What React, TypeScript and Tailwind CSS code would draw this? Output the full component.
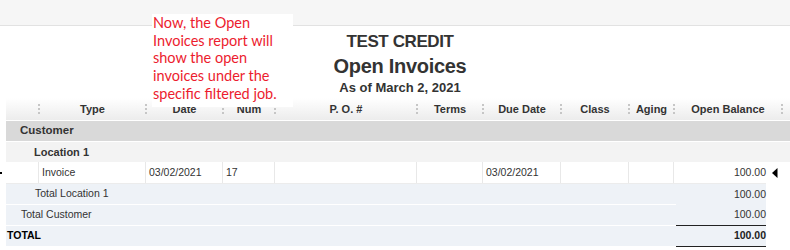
const cols = [
  { label: '', w: 'w-[32px]' },
  { label: 'Type', w: 'w-[107px]' },
  { label: 'Date', w: 'w-[77px]' },
  { label: 'Num', w: 'w-[52px]' },
  { label: 'P. O. #', w: 'w-[142px]' },
  { label: 'Terms', w: 'w-[66px]' },
  { label: 'Due Date', w: 'w-[78px]' },
  { label: 'Class', w: 'w-[68px]' },
  { label: 'Aging', w: 'w-[45px]' },
]

function Sep() {
  return <span className="h-[10px] w-0 shrink-0 border-l-2 border-dotted border-[#c6c6c6]" />
}

function HeaderRow() {
  return (
    <div className="flex h-[22px]">
      <div className="w-[6px] shrink-0" />
      <div className="flex flex-1 bg-gradient-to-b from-white to-[#ececec] text-[11px] font-bold text-[#333]">
        {cols.map((c, i) => (
          <div key={i} className={`${c.w} flex shrink-0 items-center`}>
            {i > 0 && <Sep />}
            <span className="flex-1 text-center">{c.label}</span>
          </div>
        ))}
        <div className="flex w-[108px] shrink-0 items-center">
          <Sep />
          <span className="flex-1 text-center">Open Balance</span>
        </div>
        <div className="flex flex-1 items-center">
          <Sep />
        </div>
      </div>
    </div>
  )
}

function GroupRow({ label, className }: { label: string; className: string }) {
  return (
    <div className="mt-[1px] flex h-[20px]">
      <div className="w-[6px] shrink-0" />
      <div className={`flex flex-1 items-center font-bold text-[#333] ${className}`}>{label}</div>
    </div>
  )
}

function InvoiceRow() {
  const cells = ['Invoice', '03/02/2021', '17', '', '', '03/02/2021', '', '']
  return (
    <div className="flex h-[22px]">
      <div className="flex w-[6px] shrink-0 items-center">
        <span className="h-[2px] w-[2px] bg-black" />
      </div>
      <div className="flex w-[760px] shrink-0 border-b border-[#ececec] bg-white text-[10.5px] text-[#333]">
        <div className="w-[32px] shrink-0" />
        {cells.map((t, i) => (
          <div
            key={i}
            className={`${cols[i + 1].w} flex shrink-0 items-center border-l border-[#e8e8e8] pl-[3px]`}
          >
            {t}
          </div>
        ))}
        <div className="flex flex-1 items-center justify-end border-l border-[#e8e8e8]">100.00</div>
      </div>
      <div className="flex flex-1 items-center pl-[6px]">
        <svg width="6" height="10" viewBox="0 0 6 10">
          <path d="M5.5 0 L0 5 L5.5 10 Z" fill="#000" />
        </svg>
      </div>
    </div>
  )
}

function TotalRow({
  label,
  pad,
  bold,
  lineBelow,
}: {
  label: string
  pad: string
  bold?: boolean
  lineBelow?: boolean
}) {
  return (
    <div className="flex h-[21px]">
      <div className="w-[6px] shrink-0" />
      <div
        className={`flex w-[670px] shrink-0 items-center border-b border-white bg-[#eef2f7] ${pad} ${
          bold ? 'font-bold text-black' : 'text-[#333]'
        }`}
      >
        {label}
      </div>
      <div
        className={`flex w-[90px] shrink-0 items-center justify-end bg-[#eef2f7] ${
          lineBelow ? 'border-b border-[#222]' : ''
        } ${bold ? 'font-bold text-[#222]' : 'text-[#333]'}`}
      >
        100.00
      </div>
      <div className="flex-1" />
    </div>
  )
}

export default function App() {
  return (
    <div className="relative h-[250px] w-[790px] overflow-hidden bg-white font-['Liberation_Sans',Arial,sans-serif]">
      <div className="h-[26px] border-b border-[#e2e2e2] bg-[#f6f6f6]" />

      <div className="mt-[6px] flex flex-col items-center pl-[10px] font-bold text-[#333]">
        <div className="h-[20px] text-[17px] leading-[20px] tracking-[-0.4px]">TEST CREDIT</div>
        <div className="mt-[2px] h-[24px] text-[20px] leading-[24px] tracking-[-0.3px]">Open Invoices</div>
        <div className="mt-[2px] h-[16px] text-[13px] leading-[16px]">As of March 2, 2021</div>
      </div>

      <div className="mt-[2px]">
        <HeaderRow />
        <GroupRow label="Customer" className="bg-[#d9d9d9] pl-[14px] text-[11.5px]" />
        <GroupRow label="Location 1" className="bg-[#f3f3f3] pl-[28px] text-[11px]" />
        <InvoiceRow />
        <div className="text-[10.5px]">
          <TotalRow label="Total Location 1" pad="pl-[29px]" />
          <TotalRow label="Total Customer" pad="pl-[15px]" lineBelow />
          <TotalRow label="TOTAL" pad="pl-[1px]" bold lineBelow />
        </div>
      </div>

      {/* callout note over the header */}
      <div className="absolute left-[152px] top-[14px] h-[93px] w-[141px] bg-white pl-[1px] font-['Lato',sans-serif] text-[14.5px] leading-[17.7px] text-[#ec1c2e]">
        Now, the Open
        <br />
        Invoices report will
        <br />
        show the open
        <br />
        invoices under the
        <br />
        specific filtered job.
      </div>
    </div>
  )
}
